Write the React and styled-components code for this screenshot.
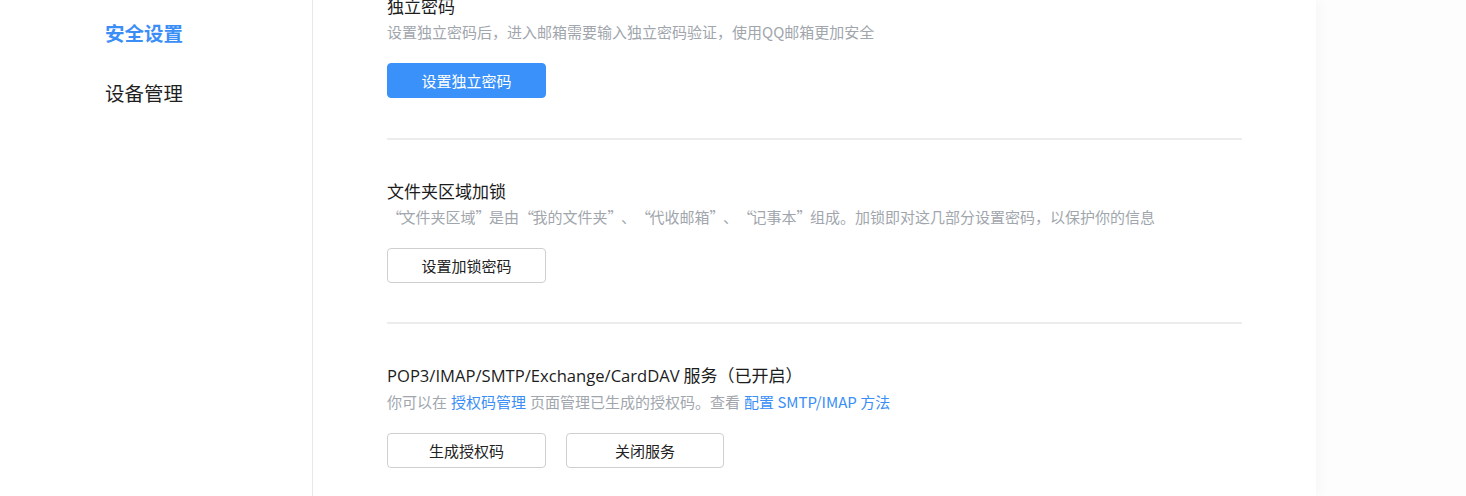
import React from "react";
import styled, { createGlobalStyle } from "styled-components";

const Global = createGlobalStyle`
  html, body { margin: 0; padding: 0; background: #fdfdfd; }
  body { font-family: "Noto Sans", "Noto Sans CJK SC", sans-serif; overflow: hidden; }
  * { box-sizing: border-box; }
`;

const Page = styled.div`
  display: flex;
  width: 1466px;
  height: 496px;
  overflow: hidden;
`;

const Card = styled.div`
  display: flex;
  width: 1316px;
  height: 496px;
  background: #fff;
  box-shadow: 2px 0 14px rgba(0, 0, 0, 0.035);
`;

const Sidebar = styled.nav`
  width: 313px;
  flex-shrink: 0;
  border-right: 1px solid #e8e8e8;
  padding: 19px 0 0 105px;
  display: flex;
  flex-direction: column;
  gap: 32px;
`;

const NavItem = styled.div`
  font-family: "Noto Sans CJK SC", sans-serif;
  font-size: 19.5px;
  line-height: 28px;
  font-weight: ${(p) => (p.$active ? 700 : 400)};
  color: ${(p) => (p.$active ? "#3a8ef6" : "#1f1f1f")};
`;

const Main = styled.main`
  flex: 1;
  padding: 0 74px;
  margin-top: -45px;
`;

const Section = styled.section`
  padding: 39px 0 39.5px;
  border-bottom: ${(p) => (p.$last ? "none" : "2px solid #ececec")};
`;

const Title = styled.div`
  font-family: "Noto Sans CJK SC", sans-serif;
  font-size: 17px;
  line-height: 24px;
  color: #1c1c1c;
`;

const Latin = styled.span`
  font-family: "Open Sans", "Noto Sans CJK SC", sans-serif;
  font-size: 16.6px;
`;

const Desc = styled.div`
  margin-top: 3px;
  font-family: "Noto Sans CJK SC", sans-serif;
  font-size: 15px;
  line-height: 22px;
  color: #a1a6ad;
  white-space: nowrap;
`;

const Q = styled.span`
  display: inline-block;
  width: 0.9em;
  text-align: ${(p) => (p.$open ? "right" : "left")};
`;

const Link = styled.a`
  color: #3a8ef6;
  text-decoration: none;
  margin: 0 4px;
`;

const Buttons = styled.div`
  margin-top: 20px;
  display: flex;
  gap: 20px;
`;

const Button = styled.button`
  width: ${(p) => p.$w || 159}px;
  height: 35px;
  border-radius: 4px;
  font-family: "Noto Sans CJK SC", sans-serif;
  font-size: 15px;
  cursor: pointer;
  border: 1px solid ${(p) => (p.$primary ? "#3a91f9" : "#cfcfcf")};
  background: ${(p) => (p.$primary ? "#3a91f9" : "#fff")};
  color: ${(p) => (p.$primary ? "#fff" : "#222")};
`;

const Quoted = ({ children }) => (
  <>
    <Q $open>“</Q>
    {children}
    <Q>”</Q>
  </>
);

export default function App() {
  return (
    <>
      <Global />
      <Page>
        <Card>
          <Sidebar>
            <NavItem $active>安全设置</NavItem>
            <NavItem>设备管理</NavItem>
          </Sidebar>
          <Main>
            <Section>
              <Title>独立密码</Title>
              <Desc>设置独立密码后，进入邮箱需要输入独立密码验证，使用QQ邮箱更加安全</Desc>
              <Buttons>
                <Button $primary>设置独立密码</Button>
              </Buttons>
            </Section>
            <Section>
              <Title>文件夹区域加锁</Title>
              <Desc>
                <Quoted>文件夹区域</Quoted>是由<Quoted>我的文件夹</Quoted>、
                <Quoted>代收邮箱</Quoted>、<Quoted>记事本</Quoted>
                组成。加锁即对这几部分设置密码，以保护你的信息
              </Desc>
              <Buttons>
                <Button>设置加锁密码</Button>
              </Buttons>
            </Section>
            <Section $last>
              <Title>
                <Latin>POP3/IMAP/SMTP/Exchange/CardDAV</Latin> 服务（已开启）
              </Title>
              <Desc>
                你可以在<Link>授权码管理</Link>页面管理已生成的授权码。查看
                <Link>配置 SMTP/IMAP 方法</Link>
              </Desc>
              <Buttons>
                <Button>生成授权码</Button>
                <Button $w={158}>关闭服务</Button>
              </Buttons>
            </Section>
          </Main>
        </Card>
      </Page>
    </>
  );
}
